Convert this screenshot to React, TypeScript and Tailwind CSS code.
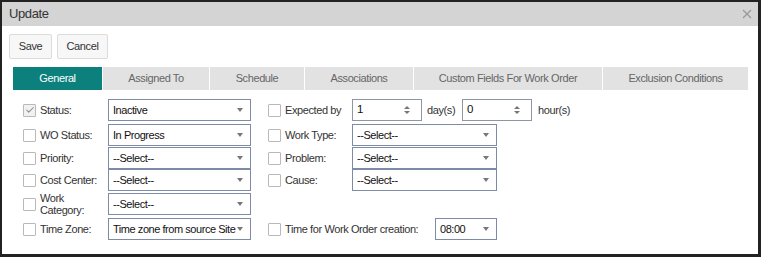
import { Check } from 'lucide-react';

const tabs = [
  { name: 'General', w: 'w-[89px]', active: true },
  { name: 'Assigned To', w: 'w-[106px]' },
  { name: 'Schedule', w: 'w-[94px]' },
  { name: 'Associations', w: 'w-[108px]' },
  { name: 'Custom Fields For Work Order', w: 'w-[188px]' },
  { name: 'Exclusion Conditions', w: 'w-[145px]' },
];

function Box({ checked }: { checked?: boolean }) {
  return (
    <span
      className={`w-[13px] h-[13px] shrink-0 border border-[#b9b9b9] rounded-[1px] flex items-center justify-center ${
        checked ? 'bg-[#f1f1f1]' : 'bg-white'
      }`}
    >
      {checked && <Check className="w-[10px] h-[10px] text-[#8a8a8a]" strokeWidth={2.5} />}
    </span>
  );
}

function Caret() {
  return <span className="shrink-0 w-0 h-0 border-l-[3px] border-r-[3px] border-t-[4px] border-l-transparent border-r-transparent border-t-[#777]" />;
}

function Select({ value, w = 'w-[143px]' }: { value: string; w?: string }) {
  return (
    <div className={`${w} h-[22px] shrink-0 border border-[#7e8ba6] bg-white flex items-center justify-between pl-[4px] pr-[7px] text-[11px] text-[#111] tracking-[-0.45px]`}>
      <span className="whitespace-nowrap">{value}</span>
      <Caret />
    </div>
  );
}

function Spin({ value }: { value: string }) {
  return (
    <div className="w-[70px] h-[22px] shrink-0 border border-[#8f96a3] bg-white flex items-center justify-between pl-[4px] pr-[11px] text-[11.5px] text-[#111]">
      <span>{value}</span>
      <span className="flex flex-col gap-[2px] items-center">
        <span className="w-0 h-0 border-l-[3px] border-r-[3px] border-b-[3px] border-l-transparent border-r-transparent border-b-[#777]" />
        <span className="w-0 h-0 border-l-[3px] border-r-[3px] border-t-[3px] border-l-transparent border-r-transparent border-t-[#777]" />
      </span>
    </div>
  );
}

function Field({ label, checked, children }: { label: React.ReactNode; checked?: boolean; children: React.ReactNode }) {
  return (
    <div className="flex items-center">
      <div className="w-[85px] flex items-center gap-[4px]">
        <Box checked={checked} />
        <span className="leading-[12px] whitespace-nowrap">{label}</span>
      </div>
      {children}
    </div>
  );
}

function Right({ label, lw = 'w-[84px]', children }: { label: string; lw?: string; children?: React.ReactNode }) {
  return (
    <div className="flex items-center ml-[17px]">
      <div className={`${lw} shrink-0 flex items-center gap-[4px]`}>
        <Box />
        <span className="whitespace-nowrap">{label}</span>
      </div>
      {children}
    </div>
  );
}

export default function App() {
  return (
    <div className="w-[761px] h-[257px] bg-white border-l-2 border-t-2 border-r-[3px] border-b-[3px] border-[#222] flex flex-col font-['Liberation_Sans',Arial,sans-serif] text-[11px] text-[#333] tracking-[-0.4px]">
      {/* Header */}
      <div className="h-[24px] shrink-0 bg-[#d4d4d4] flex items-center justify-between pl-[7px] pr-[6px]">
        <span className="text-[13px] text-[#333]">Update</span>
        <svg width="10" height="10" viewBox="0 0 10 10" className="text-[#9a9a9a]">
          <path d="M1 1L9 9M9 1L1 9" stroke="currentColor" strokeWidth="1.3" />
        </svg>
      </div>

      {/* Buttons */}
      <div className="mt-[8px] ml-[7px] flex gap-[5px]">
        <button className="w-[43px] h-[25px] border border-[#dcdcdc] rounded-[2px] bg-[#f7f7f7] text-[11px] text-[#333]">Save</button>
        <button className="w-[51px] h-[25px] border border-[#dcdcdc] rounded-[2px] bg-[#f7f7f7] text-[11px] text-[#333]">Cancel</button>
      </div>

      {/* Tabs */}
      <div className="mt-[8px] ml-[11px] flex gap-px h-[23px]">
        {tabs.map((t) => (
          <div
            key={t.name}
            className={`${t.w} h-full flex items-center justify-center ${
              t.active ? 'bg-[#0b807d] text-white' : 'bg-[#e2e2e2] text-[#666]'
            }`}
          >
            {t.name}
          </div>
        ))}
      </div>

      {/* Form */}
      <div className="mt-[9px] ml-[21px] flex flex-col">
        <div className="flex items-center">
          <Field label="Status:" checked>
            <Select value="Inactive" />
          </Field>
          <Right label="Expected by">
            <Spin value="1" />
            <span className="w-[40px] pl-[5px]">day(s)</span>
            <Spin value="0" />
            <span className="ml-[6px]">hour(s)</span>
          </Right>
        </div>
        <div className="flex items-center mt-[3px]">
          <Field label="WO Status:">
            <Select value="In Progress" />
          </Field>
          <Right label="Work Type:">
            <Select value="--Select--" w="w-[145px]" />
          </Right>
        </div>
        <div className="flex items-center mt-[1px]">
          <Field label="Priority:">
            <Select value="--Select--" />
          </Field>
          <Right label="Problem:">
            <Select value="--Select--" w="w-[145px]" />
          </Right>
        </div>
        <div className="flex items-center mt-[0px]">
          <Field label="Cost Center:">
            <Select value="--Select--" />
          </Field>
          <Right label="Cause:">
            <Select value="--Select--" w="w-[145px]" />
          </Right>
        </div>
        <div className="flex items-center mt-[1px]">
          <Field
            label={
              <>
                Work
                <br />
                Category:
              </>
            }
          >
            <Select value="--Select--" />
          </Field>
        </div>
        <div className="flex items-center mt-[2px]">
          <Field label="Time Zone:">
            <Select value="Time zone from source Site" />
          </Field>
          <Right label="Time for Work Order creation:" lw="w-[167px]">
            <Select value="08:00" w="w-[62px]" />
          </Right>
        </div>
      </div>
    </div>
  );
}
